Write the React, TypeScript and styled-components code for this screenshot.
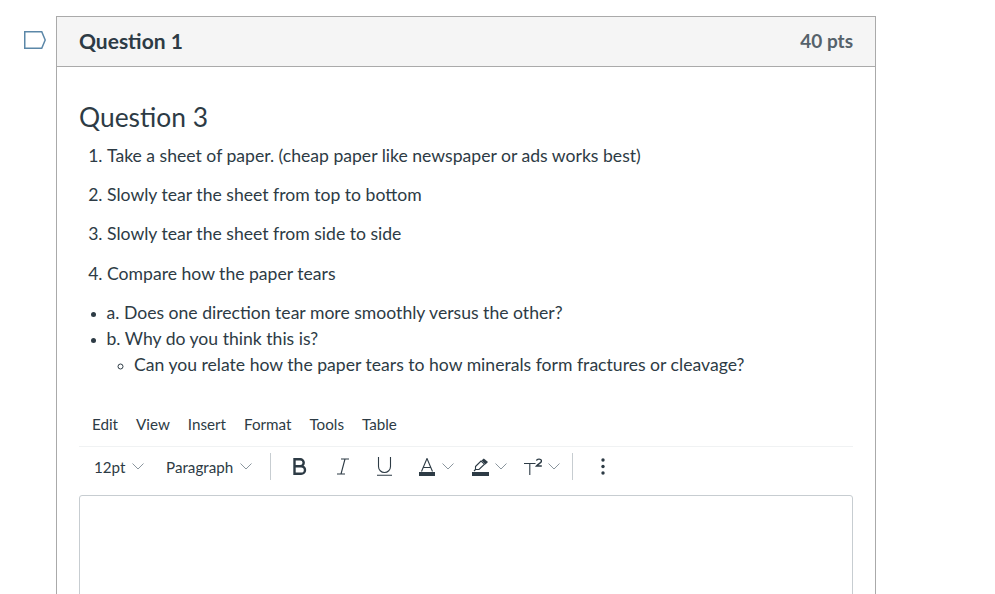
import React from 'react';
import styled, { createGlobalStyle } from 'styled-components';

const GlobalStyle = createGlobalStyle`
  html, body {
    margin: 0;
    padding: 0;
    height: 100%;
    overflow: hidden;
    background: #fff;
  }
  body {
    font-family: Lato, "Liberation Sans", sans-serif;
    color: #2d3b45;
  }
`;

const Page = styled.div`
  height: 594px;
  padding: 16px 0 0 56px;
  box-sizing: border-box;
  overflow: hidden;
`;

const Card = styled.section`
  position: relative;
  width: 820px;
  height: 700px;
  box-sizing: border-box;
  border: 1px solid #aaaaaa;
`;

const Flag = styled.svg`
  position: absolute;
  left: -33px;
  top: 14px;
`;

const Header = styled.header`
  display: flex;
  justify-content: space-between;
  align-items: center;
  height: 46px;
  padding: 0 22px 3px;
  background: #f5f5f5;
  border-bottom: 1px solid #aaaaaa;
`;

const QuestionName = styled.h2`
  margin: 0;
  font-size: 21px;
  font-weight: 700;
`;

const Points = styled.div`
  font-size: 19px;
  font-weight: 700;
  color: #56626b;
`;

const Content = styled.div`
  padding: 33px 22px 0;
`;

const Heading = styled.h3`
  margin: 0 0 8px;
  font-size: 26.4px;
  line-height: 34px;
  font-weight: 400;
`;

const Steps = styled.ol`
  margin: 0;
  padding: 0 0 0 28px;
  font-size: 17.6px;
  line-height: 27px;
`;

const Step = styled.li`
  margin-bottom: 12.2px;
`;

const Bullets = styled.ul`
  margin: 0;
  padding: 1px 0 0 27.5px;
  font-size: 17.6px;
  line-height: 26px;

  li::marker {
    font-size: 14px;
  }
`;

const SubBullets = styled.ul`
  margin: 0;
  padding: 0 0 0 27.5px;
  list-style-type: circle;
`;

const Editor = styled.div`
  margin-top: 25px;
`;

const MenuBar = styled.nav`
  display: flex;
  gap: 18px;
  height: 44px;
  padding-left: 13px;
  align-items: center;
  box-sizing: border-box;
  border-bottom: 1px solid #f0f2f3;
  font-size: 15.2px;
`;

const Toolbar = styled.div`
  display: flex;
  align-items: center;
  height: 40px;
  margin-bottom: 8px;
  padding-left: 15px;
  font-size: 15.2px;
`;

const Select = styled.span<{ $width: number }>`
  display: flex;
  align-items: center;
  gap: 7px;
  width: ${(p) => p.$width}px;
`;

const Divider = styled.span<{ $left?: number }>`
  flex: none;
  width: 1px;
  height: 27px;
  margin-left: ${(p) => p.$left ?? 0}px;
  background: #c7cdd1;
`;

const ToolIcon = styled.svg<{ $left: number }>`
  display: block;
  flex: none;
  margin-left: ${(p) => p.$left}px;
`;

const TextArea = styled.div`
  height: 120px;
  border: 1px solid #c7cdd1;
  border-radius: 3px;
`;

const Chevron = ({ left = 0 }: { left?: number }) => (
  <ToolIcon $left={left} width="12" height="7" viewBox="0 0 12 7" fill="none" stroke="#8b969e" strokeWidth="1">
    <path d="M.5.5L6 6l5.500-5.500" />
  </ToolIcon>
);

export default function App() {
  return (
    <Page>
      <GlobalStyle />
      <Card>
        <Flag width="22" height="18" viewBox="0 0 22 18" fill="none">
          <path d="M.75.75h17L21.200 9l-3.450 8.250h-17z" stroke="#5b87a8" strokeWidth="1.500" />
        </Flag>
        <Header>
          <QuestionName>Question 1</QuestionName>
          <Points>40 pts</Points>
        </Header>
        <Content>
          <Heading>Question 3</Heading>
          <Steps>
            <Step>Take a sheet of paper. (cheap paper like newspaper or ads works best)</Step>
            <Step>Slowly tear the sheet from top to bottom</Step>
            <Step>Slowly tear the sheet from side to side</Step>
            <Step>Compare how the paper tears</Step>
          </Steps>
          <Bullets>
            <li>a. Does one direction tear more smoothly versus the other?</li>
            <li>
              b. Why do you think this is?
              <SubBullets>
                <li>Can you relate how the paper tears to how minerals form fractures or cleavage?</li>
              </SubBullets>
            </li>
          </Bullets>
          <Editor>
            <MenuBar>
              <span>Edit</span>
              <span>View</span>
              <span>Insert</span>
              <span>Format</span>
              <span>Tools</span>
              <span>Table</span>
            </MenuBar>
            <Toolbar>
              <Select $width={72}>12pt <Chevron /></Select>
              <Select $width={104}>Paragraph <Chevron /></Select>
              <Divider />
              {/* bold */}
              <ToolIcon $left={22} width="14" height="17" viewBox="0 0 14 17" fill="none" stroke="#2d3b45" strokeWidth="2.400">
                <path d="M1.500 1.200h5.700a3.500 3.500 0 0 1 0 7H1.500zM1.500 8.200h6.700a3.800 3.800 0 0 1 0 7.600H1.500z" />
              </ToolIcon>
              {/* italic */}
              <ToolIcon $left={30} width="12" height="17" viewBox="0 0 12 17" fill="none" stroke="#2d3b45" strokeWidth="1.100">
                <path d="M4 1h8M0 16h8M8 1L4 16" />
              </ToolIcon>
              {/* underline */}
              <ToolIcon $left={28} width="15" height="19" viewBox="0 0 15 19" fill="none" stroke="#2d3b45" strokeWidth="1.100">
                <path d="M1.500 0v9.500a6 6 0 0 0 12 0V0M0 18.300h15" />
              </ToolIcon>
              {/* text colour */}
              <ToolIcon $left={27} width="16" height="18" viewBox="0 0 16 18" fill="none" stroke="#2d3b45" strokeWidth="1.100">
                <path d="M2.500 13.500L8 .5l5.500 13M4.300 9.500h7.400" />
                <rect y="14" width="16" height="4" fill="#2d3b45" stroke="none" />
              </ToolIcon>
              <Chevron left={7} />
              {/* highlight */}
              <ToolIcon $left={18} width="17" height="18" viewBox="0 0 17 18" fill="none" stroke="#2d3b45" strokeWidth="1.100">
                <path d="M3.500 8.500L9 3l3.500 3.200-5.500 5.300H3.500zM3.500 11.500L2 13" />
                <path d="M9.500 2.500L11.800.5 16 4l-2.500 2.500z" fill="#2d3b45" stroke="none" />
                <rect y="14" width="17" height="4" fill="#2d3b45" stroke="none" />
              </ToolIcon>
              <Chevron left={6} />
              {/* superscript */}
              <ToolIcon $left={17} width="18" height="17" viewBox="0 0 18 17" fill="none" stroke="#2d3b45" strokeWidth="1.100">
                <path d="M0 5.500h11.500M5.800 5.500V17" />
                <path d="M12.500 2.600c.4-2.100 5-2.100 5 .5 0 1.700-2.800 2.500-5 4.900h5.300" strokeWidth="1.400" />
              </ToolIcon>
              <Chevron left={6} />
              <Divider $left={12} />
              {/* more */}
              <ToolIcon $left={28} width="4" height="17" viewBox="0 0 4 17" fill="#2d3b45">
                <circle cx="2" cy="2" r="1.700" />
                <circle cx="2" cy="8.500" r="1.700" />
                <circle cx="2" cy="15" r="1.700" />
              </ToolIcon>
            </Toolbar>
            <TextArea />
          </Editor>
        </Content>
      </Card>
    </Page>
  );
}
